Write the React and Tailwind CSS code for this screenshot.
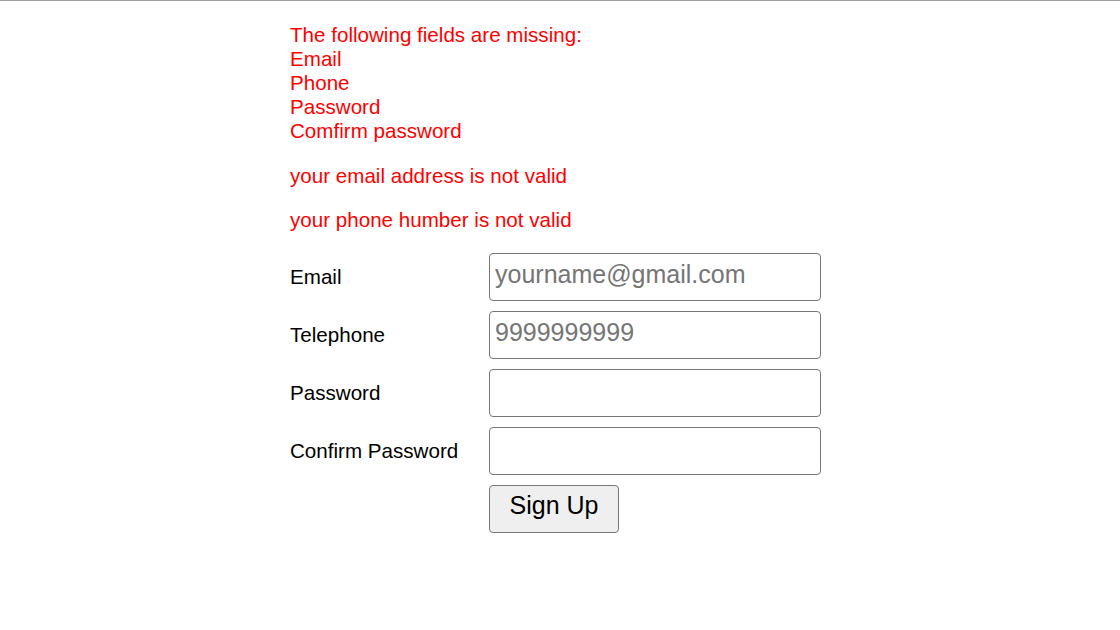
const missing = ['Email', 'Phone', 'Password', 'Comfirm password']

const fields = [
  { label: 'Email', type: 'text', placeholder: 'yourname@gmail.com' },
  { label: 'Telephone', type: 'text', placeholder: '9999999999' },
  { label: 'Password', type: 'password', placeholder: '' },
  { label: 'Confirm Password', type: 'password', placeholder: '' },
]

const App = () => {
  return (
    <div className="min-h-[630px] bg-white border-t border-[#a0a0a0] font-['Liberation_Sans',Arial,sans-serif]">
      <div className="ml-[290px] pt-[22px] text-[20.6px] leading-[24px]">
        {/* Errors */}
        <div className="text-[#ff0000]">
          <div>The following fields are missing:</div>
          {missing.map((m) => (
            <div key={m}>{m}</div>
          ))}
        </div>
        <p className="mt-[21px] text-[#ff0000]">your email address is not valid</p>
        <p className="mt-[20px] text-[#ff0000]">your phone humber is not valid</p>

        {/* Form */}
        <form className="mt-[21px] flex flex-col gap-[10px]" onSubmit={(e) => e.preventDefault()}>
          {fields.map((f) => (
            <div key={f.label} className="flex items-center">
              <label className="w-[199px] text-black">{f.label}</label>
              <input
                type={f.type}
                placeholder={f.placeholder}
                className="w-[332px] h-[48px] pl-[5px] pr-[5px] pb-[6px] border border-[#767676] rounded-[4px] text-[25px] text-black placeholder:text-[#757575] bg-white outline-none"
              />
            </div>
          ))}
          <div className="flex">
            <div className="w-[199px]" />
            <button
              type="submit"
              className="w-[130px] h-[48px] pb-[8px] border border-[#767676] rounded-[4px] bg-[#efefef] text-[25px] text-black"
            >
              Sign Up
            </button>
          </div>
        </form>
      </div>
    </div>
  )
}

export default App
